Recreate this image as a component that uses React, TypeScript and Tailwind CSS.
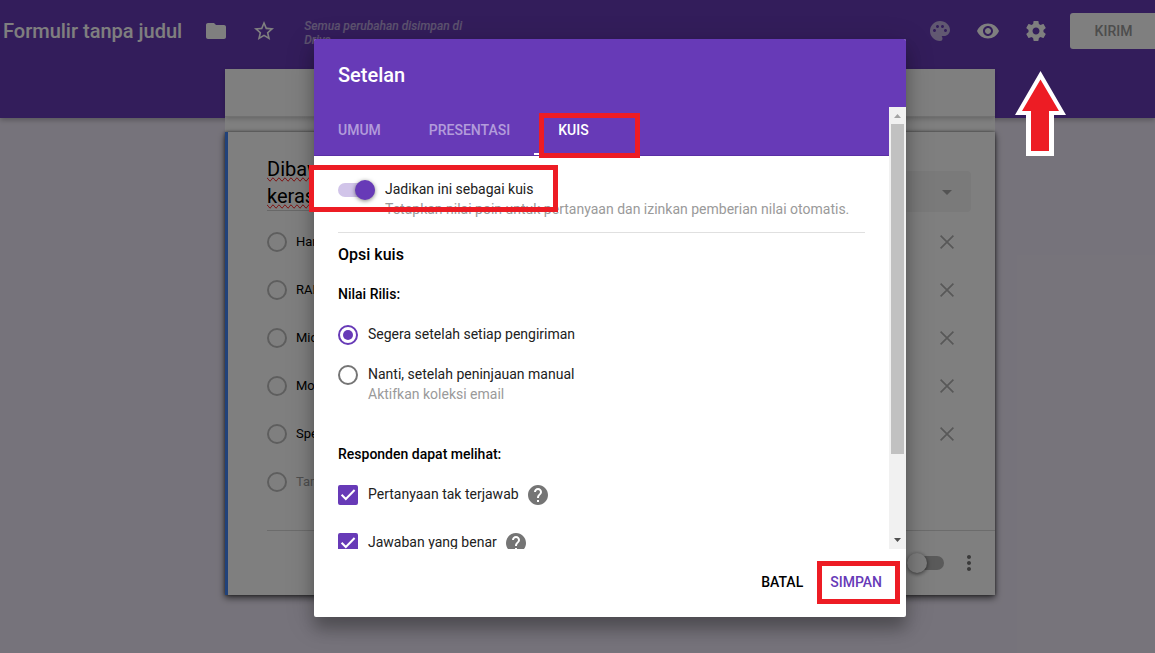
import React, { useState } from "react";
import {
  MdArrowDropDown,
  MdFolder,
  MdHelp,
  MdMoreVert,
  MdPalette,
  MdStarBorder,
  MdVisibility,
} from "react-icons/md";

const OPTIONS = ["Harddisk", "RAM", "Microphone", "Monitor", "Speaker"];

function GearIcon() {
  return (
    <svg viewBox="0 0 24 24" className="size-6" fill="currentColor" aria-hidden="true">
      <path d="M19.43 12.98c.04-.32.07-.64.07-.98s-.03-.66-.07-.98l2.11-1.65c.19-.15.24-.42.12-.64l-2-3.46c-.12-.22-.39-.3-.61-.22l-2.49 1c-.52-.4-1.08-.73-1.69-.98l-.38-2.65C14.46 2.18 14.25 2 14 2h-4c-.25 0-.46.18-.49.42l-.38 2.65c-.61.25-1.17.59-1.69.98l-2.49-1c-.23-.09-.49 0-.61.22l-2 3.46c-.13.22-.07.49.12.64l2.11 1.65c-.04.32-.07.65-.07.98s.03.66.07.98l-2.11 1.65c-.19.15-.24.42-.12.64l2 3.46c.12.22.39.3.61.22l2.49-1c.52.4 1.08.73 1.69.98l.38 2.65c.03.24.24.42.49.42h4c.25 0 .46-.18.49-.42l.38-2.65c.61-.25 1.17-.59 1.69-.98l2.49 1c.23.09.49 0 .61-.22l2-3.46c.12-.22.07-.49-.12-.64l-2.11-1.65zM12 15.5c-1.93 0-3.5-1.57-3.5-3.5s1.57-3.5 3.5-3.5 3.5 1.57 3.5 3.5-1.57 3.5-3.5 3.5z" />
    </svg>
  );
}

function CloseIcon() {
  return (
    <svg viewBox="0 0 14 14" className="size-3.5" fill="none" stroke="currentColor" strokeWidth="1.7" aria-hidden="true">
      <path d="M.6.6l12.8 12.8M13.4.6L.6 13.4" />
    </svg>
  );
}

function TopBar() {
  return (
    <header className="h-[118px] bg-[#673ab7] text-white shadow-[0_2px_5px_rgba(0,0,0,0.26)]">
      <div className="flex h-[62px] items-center overflow-hidden pl-[3px]">
        <h1 className="shrink-0 text-xl font-medium">Formulir tanpa judul</h1>
        <button type="button" aria-label="Pindahkan ke folder" className="ml-[22px] shrink-0">
          <MdFolder className="size-6" />
        </button>
        <button type="button" aria-label="Beri bintang" className="ml-6 shrink-0">
          <MdStarBorder className="size-6" />
        </button>
        <p className="ml-7 w-44 shrink-0 pt-1 text-xs leading-[14px] font-medium text-white/55 italic">
          Semua perubahan disimpan di Drive
        </p>
        <div className="ml-auto flex shrink-0 items-center gap-6">
          <button type="button" aria-label="Sesuaikan tema" className="text-white/60">
            <MdPalette className="size-6" />
          </button>
          <button type="button" aria-label="Pratinjau">
            <MdVisibility className="size-6" />
          </button>
          <button type="button" aria-label="Setelan">
            <GearIcon />
          </button>
        </div>
        <button
          type="button"
          className="-mr-0.5 ml-[22px] h-9 w-[87px] shrink-0 rounded-[3px] bg-white text-sm font-medium text-[#9a9a9a]"
        >
          KIRIM
        </button>
      </div>
    </header>
  );
}

function QuestionCard() {
  return (
    <section className="border-l-[3px] border-[#4285f4] bg-white pl-[39px] shadow-[0_0_3px_rgba(0,0,0,0.5),0_3px_7px_rgba(0,0,0,0.6)]">
      <div className="flex items-start pt-6 pr-6">
        <p className="w-[400px] border-b border-[#d0d0d0] text-xl leading-[27px] text-black">
          <span className="[text-decoration-line:spelling-error]">Dibawah</span>
          <br />
          <span className="[text-decoration-line:spelling-error]">keras</span>
        </p>
        <button
          type="button"
          aria-label="Jenis pertanyaan"
          className="mt-[15px] ml-auto flex h-[41px] w-60 items-center justify-end rounded-sm bg-[#f4f4f4] pr-3 text-[#a6a6a6]"
        >
          <MdArrowDropDown className="size-6" />
        </button>
      </div>
      <ul className="pt-1.5 pr-[41px]">
        {OPTIONS.map((option) => (
          <li key={option} className="flex h-12 items-center">
            <span className="size-5 rounded-full border-2 border-[#bdbdbd]" />
            <input
              aria-label={"Opsi " + option}
              defaultValue={option}
              className="ml-[9px] w-60 bg-transparent text-[13px] text-black outline-none"
            />
            <button type="button" aria-label={"Hapus " + option} className="ml-auto text-[#b0b0b0]">
              <CloseIcon />
            </button>
          </li>
        ))}
        <li className="flex h-12 items-center">
          <span className="size-5 rounded-full border-2 border-[#bdbdbd]" />
          <button type="button" className="ml-[9px] text-[13px] text-[#9e9e9e]">
            Tambahkan opsi
          </button>
        </li>
      </ul>
      <div className="mt-6 flex h-[65px] items-center justify-end border-t border-[#d8d8d8] pr-3.5">
        <button
          type="button"
          role="switch"
          aria-checked="false"
          aria-label="Wajib diisi"
          className="mr-[13px] flex h-5 w-[37px] items-center"
        >
          <span className="flex h-3.5 w-full items-center rounded-full bg-[#b4b4b4]">
            <span className="size-5 shrink-0 rounded-full bg-[#fafafa] shadow-[0_1px_4px_rgba(0,0,0,0.6)]" />
          </span>
        </button>
        <button type="button" aria-label="Opsi lainnya" className="text-[#757575]">
          <MdMoreVert className="size-6" />
        </button>
      </div>
    </section>
  );
}

function RadioRow(props: { id: string; label: string; hint?: string; checked: boolean; onSelect: () => void }) {
  return (
    <div className="mt-5 flex gap-2.5">
      <input
        id={props.id}
        type="radio"
        name="release"
        checked={props.checked}
        onChange={props.onSelect}
        className="mt-px -mb-px size-5 shrink-0 appearance-none rounded-full border-2 border-[#757575] bg-clip-content p-[3px] checked:border-[#673ab7] checked:bg-[#673ab7]"
      />
      <label htmlFor={props.id}>
        {props.label}
        {props.hint && <span className="block text-[#9a9a9a]">{props.hint}</span>}
      </label>
    </div>
  );
}

function CheckRow(props: { id: string; label: string }) {
  return (
    <div className="flex h-5 items-start">
      <span className="mt-px mr-2.5 grid size-5 shrink-0">
        <input
          id={props.id}
          type="checkbox"
          defaultChecked
          className="peer col-start-1 row-start-1 size-5 appearance-none rounded-xs border-2 border-[#757575] checked:border-[#673ab7] checked:bg-[#673ab7]"
        />
        <svg
          viewBox="0 0 20 20"
          className="pointer-events-none col-start-1 row-start-1 hidden size-5 peer-checked:block"
          fill="none"
          stroke="white"
          strokeWidth="2"
          aria-hidden="true"
        >
          <path d="M3.6 9.8l4.2 4.2 8.8-9" />
        </svg>
      </span>
      <label htmlFor={props.id}>{props.label}</label>
      <button type="button" aria-label="Bantuan" className="-mt-px ml-[7px] text-[#757575]">
        <MdHelp className="size-6" />
      </button>
    </div>
  );
}

function ScrollTrack() {
  return (
    <div className="flex w-[17px] shrink-0 flex-col items-center bg-[#f1f1f1]" aria-hidden="true">
      <svg viewBox="0 0 17 17" className="size-[17px]" fill="#a3a3a3">
        <path d="M5 11l3.5-4 3.5 4z" />
      </svg>
      <div className="h-[330px] w-[13px] bg-[#c1c1c1]" />
      <svg viewBox="0 0 17 17" className="mt-auto size-[17px]" fill="#505050">
        <path d="M5 6l3.5 4L12 6z" />
      </svg>
    </div>
  );
}

function SettingsDialog() {
  const [release, setRelease] = useState("now");
  const [quiz, setQuiz] = useState(true);
  return (
    <div
      role="dialog"
      aria-label="Setelan"
      className="relative w-full max-w-[592px] self-start rounded-xs bg-white text-sm leading-5 text-[#212121] shadow-[0_12px_15px_rgba(0,0,0,0.24),0_6px_30px_rgba(0,0,0,0.19)]"
    >
      <div className="flex h-[68px] items-center rounded-t-xs bg-[#673ab7] px-6 pt-1">
        <h2 className="text-xl font-medium text-white">Setelan</h2>
      </div>
      <div className="flex h-[442px] bg-[#673ab7]">
        <div className="min-w-0 flex-1 overflow-hidden bg-white">
          <div role="tablist" className="flex h-[49px] border-b border-[#5a2fa5] bg-[#673ab7] font-medium text-white/50">
            <button type="button" role="tab" aria-selected="false" className="px-6 pb-0.5">
              UMUM
            </button>
            <button type="button" role="tab" aria-selected="false" className="px-6 pb-0.5">
              PRESENTASI
            </button>
            <button type="button" role="tab" aria-selected="true" className="border-b-2 border-white px-6 text-white">
              KUIS
            </button>
          </div>
          <div className="px-6">
            <div className="flex gap-2.5 border-b border-[#e0e0e0] pt-[23px] pb-[13px]">
              <button
                type="button"
                role="switch"
                id="quiz"
                aria-checked={quiz}
                aria-labelledby="quiz-label"
                onClick={() => setQuiz(!quiz)}
                className="mt-px flex h-5 w-[37px] items-center"
              >
                <span className={"flex h-3.5 w-full items-center rounded-full bg-[#d1c4e9] " + (quiz ? "justify-end" : "justify-start")}>
                  <span className="size-5 shrink-0 rounded-full bg-[#673ab7] shadow-[0_1px_4px_rgba(0,0,0,0.5)]" />
                </span>
              </button>
              <label id="quiz-label" htmlFor="quiz">
                Jadikan ini sebagai kuis
                <span className="block text-[#9a9a9a]">
                  Tetapkan nilai poin untuk pertanyaan dan izinkan pemberian nilai otomatis.
                </span>
              </label>
            </div>
            <h3 className="mt-3 text-base leading-5 font-medium text-black">Opsi kuis</h3>
            <h4 className="mt-[19px] font-medium text-black">Nilai Rilis:</h4>
            <RadioRow
              id="release-now"
              label="Segera setelah setiap pengiriman"
              checked={release === "now"}
              onSelect={() => setRelease("now")}
            />
            <RadioRow
              id="release-later"
              label="Nanti, setelah peninjauan manual"
              hint="Aktifkan koleksi email"
              checked={release === "later"}
              onSelect={() => setRelease("later")}
            />
            <h4 className="mt-10 mb-5 font-medium text-black">Responden dapat melihat:</h4>
            <div className="flex flex-col gap-7">
              <CheckRow id="missed" label="Pertanyaan tak terjawab" />
              <CheckRow id="correct" label="Jawaban yang benar" />
            </div>
          </div>
        </div>
        <ScrollTrack />
      </div>
      <div className="flex h-[68px] items-center justify-end gap-[27px] pr-6 pb-0.5 font-medium">
        <button type="button" className="text-black">
          BATAL
        </button>
        <button type="button" className="text-[#673ab7]">
          SIMPAN
        </button>
      </div>
      <div className="pointer-events-none absolute top-[74px] left-[225px] h-[45px] w-[101px] border-5 border-[#ed1c24]" />
      <div className="pointer-events-none absolute top-[126px] left-[-5px] h-[47px] w-[249px] border-5 border-[#ed1c24]" />
      <div className="pointer-events-none absolute top-[522px] left-[503px] h-[43px] w-[83px] border-5 border-[#ed1c24]" />
    </div>
  );
}

export default function App() {
  return (
    <div className="relative min-h-screen overflow-hidden bg-[#ede7f6] font-['Roboto',sans-serif]">
      <TopBar />
      <main className="-mt-[49px] pl-[65px]">
        <div className="relative mx-auto w-full max-w-[770px] bg-white">
          <div className="mb-[15px] h-12 border-b border-[#e0e0e0] bg-white shadow-[0_2px_5px_rgba(0,0,0,0.2)]" />
          <QuestionCard />
        </div>
      </main>
      <div className="absolute inset-0 flex justify-center bg-black/50 pt-[39px] pl-[65px]">
        <SettingsDialog />
      </div>
      <svg
        viewBox="0 0 51 85"
        className="pointer-events-none absolute top-[71px] right-[89px] h-[85px] w-[51px]"
        aria-hidden="true"
      >
        <path d="M25.5 0L51 44H39v41H11V44H0z" fill="#fff" />
        <path d="M25.5 8.5L44 40H34v40H16V40H7z" fill="#ed1c24" />
      </svg>
    </div>
  );
}
